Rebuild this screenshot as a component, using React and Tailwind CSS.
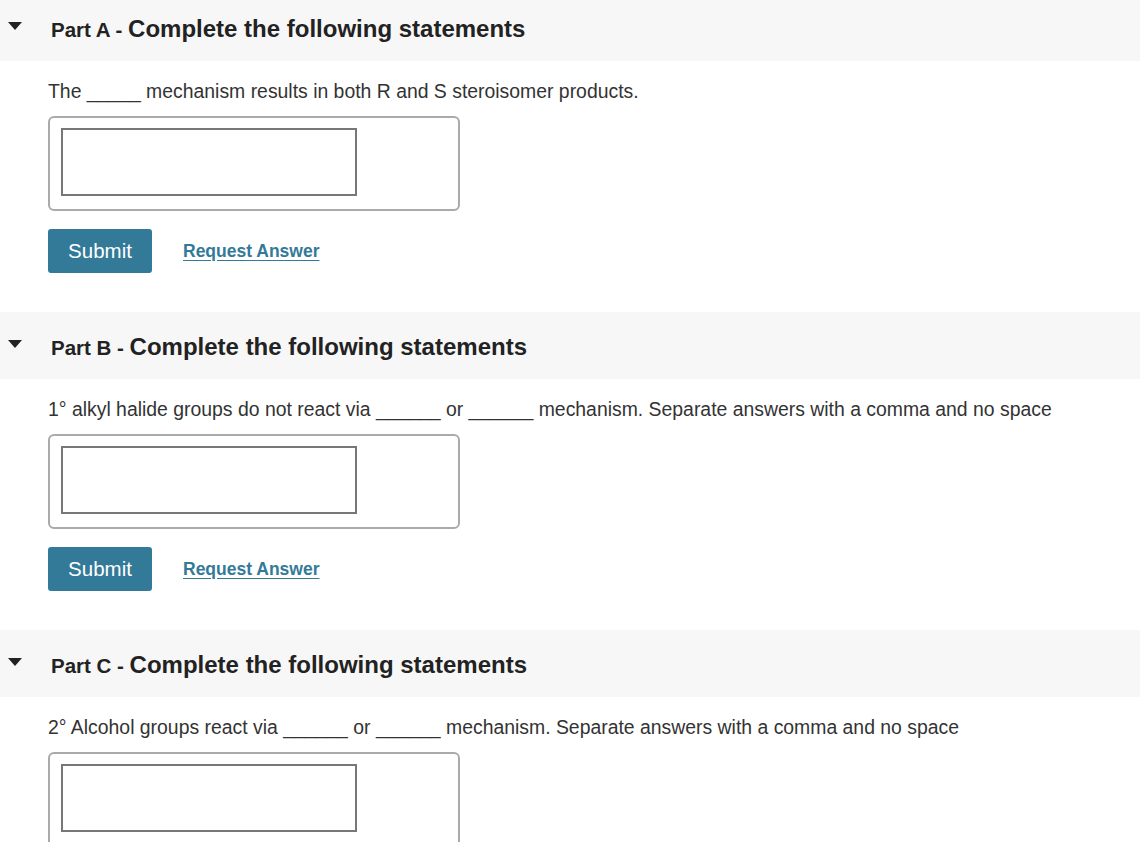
import React from "react";

const sections = [
  {
    part: "Part A",
    q: "The _____ mechanism results in both R and S steroisomer products.",
  },
  {
    part: "Part B",
    q: "1° alkyl halide groups do not react via ______ or ______ mechanism. Separate answers with a comma and no space",
  },
  {
    part: "Part C",
    q: "2° Alcohol groups react via ______ or ______ mechanism. Separate answers with a comma and no space",
  },
];

function Section({ part, q, last }) {
  return (
    <div>
      <div className="h-[67px] bg-[#f7f7f7] flex items-center">
        <svg className="ml-[8px] mt-[-4px]" width="14" height="8" viewBox="0 0 14 8">
          <polygon points="0,0 14,0 7,8" fill="#222" />
        </svg>
        <div className="ml-[29px] mt-[2px] flex items-baseline text-[#222] font-bold">
          <span className="text-[20.5px]">{part} -&nbsp;</span>
          <span className="text-[24px]">Complete the following statements</span>
        </div>
      </div>
      <div className="pl-[48px]">
        <p className="mt-[19px] text-[19.4px] leading-[22px] text-[#333]">{q}</p>
        <div className="mt-[14px] w-[412px] h-[95px] border-2 border-[#aaaaaa] rounded-[6px] pt-[10px] pl-[11px]">
          <div className="w-[296px] h-[68px] border-2 border-[#777777] bg-white"></div>
        </div>
        {!last && (
          <div className="mt-[18px] flex items-center">
            <button className="w-[104px] h-[44px] bg-[#337a98] rounded-[3px] text-white text-[20.5px] leading-none">
              Submit
            </button>
            <a href="#" className="ml-[31px] text-[17.5px] font-bold text-[#337a98] underline underline-offset-[3px]">
              Request Answer
            </a>
          </div>
        )}
        {!last && <div className="h-[39px]"></div>}
      </div>
    </div>
  );
}

export default function App() {
  return (
    <div className="w-[1140px] h-[842px] overflow-hidden bg-white" style={{ fontFamily: '"Liberation Sans", Arial, sans-serif' }}>
      <div className="-mt-[6px]">
        {sections.map((s, i) => (
          <Section key={s.part} {...s} last={i === sections.length - 1} />
        ))}
      </div>
    </div>
  );
}
